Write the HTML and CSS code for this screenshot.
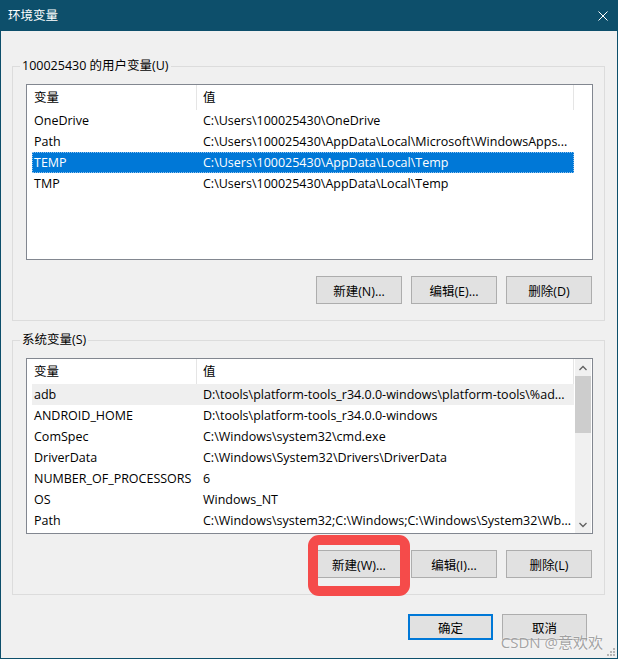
FILE: index.html
```html
<!DOCTYPE html>
<html lang="zh-CN">
<head>
    <meta charset="UTF-8">
    <meta name="viewport" content="width=device-width, initial-scale=1.0">
    <title>环境变量</title>
    <link rel="stylesheet" href="styles.css">
</head>
<body>
    <div class="window">
        <div class="titlebar">
            <span class="title">环境变量</span>
            <svg class="close" width="10" height="10" viewBox="0 0 10 10">
                <path d="M0.5 0.5 L9.5 9.5 M9.5 0.5 L0.5 9.5" stroke="#fff" stroke-width="1" fill="none"/>
            </svg>
        </div>

        <div class="content">
            <!-- 用户变量 -->
            <fieldset class="group">
                <legend>100025430 的用户变量(U)</legend>
                <div class="list">
                    <div class="list-body">
                        <div class="list-head"><div>变量</div><div>值</div></div>
                        <div class="row"><span>OneDrive</span><span>C:\Users\100025430\OneDrive</span></div>
                        <div class="row"><span>Path</span><span>C:\Users\100025430\AppData\Local\Microsoft\WindowsApps...</span></div>
                        <div class="row selected"><span>TEMP</span><span>C:\Users\100025430\AppData\Local\Temp</span></div>
                        <div class="row"><span>TMP</span><span>C:\Users\100025430\AppData\Local\Temp</span></div>
                    </div>
                    <div class="vscroll empty"></div>
                </div>
                <div class="buttons">
                    <button class="btn">新建(N)...</button>
                    <button class="btn">编辑(E)...</button>
                    <button class="btn">删除(D)</button>
                </div>
            </fieldset>

            <!-- 系统变量 -->
            <fieldset class="group">
                <legend>系统变量(S)</legend>
                <div class="list">
                    <div class="list-body">
                        <div class="list-head"><div>变量</div><div>值</div></div>
                        <div class="row current"><span>adb</span><span>D:\tools\platform-tools_r34.0.0-windows\platform-tools\%ad...</span></div>
                        <div class="row"><span>ANDROID_HOME</span><span>D:\tools\platform-tools_r34.0.0-windows</span></div>
                        <div class="row"><span>ComSpec</span><span>C:\Windows\system32\cmd.exe</span></div>
                        <div class="row"><span>DriverData</span><span>C:\Windows\System32\Drivers\DriverData</span></div>
                        <div class="row"><span>NUMBER_OF_PROCESSORS</span><span>6</span></div>
                        <div class="row"><span>OS</span><span>Windows_NT</span></div>
                        <div class="row"><span>Path</span><span>C:\Windows\system32;C:\Windows;C:\Windows\System32\Wb...</span></div>
                    </div>
                    <div class="vscroll">
                        <div class="arrow">
                            <svg width="8" height="6" viewBox="0 0 8 6"><polyline points="0.5,5 4,1.5 7.5,5" stroke="#606060" stroke-width="1.3" fill="none"/></svg>
                        </div>
                        <div class="thumb"></div>
                        <div class="track"></div>
                        <div class="arrow">
                            <svg width="8" height="6" viewBox="0 0 8 6"><polyline points="0.5,1 4,4.5 7.5,1" stroke="#606060" stroke-width="1.3" fill="none"/></svg>
                        </div>
                    </div>
                </div>
                <div class="buttons">
                    <span class="mark"><button class="btn">新建(W)...</button></span>
                    <button class="btn">编辑(I)...</button>
                    <button class="btn">删除(L)</button>
                </div>
            </fieldset>

            <div class="dialog-buttons">
                <button class="btn default">确定</button>
                <button class="btn">取消</button>
            </div>
        </div>

        <div class="watermark">CSDN @意欢欢</div>
        <svg class="grip" width="10" height="10" viewBox="0 0 10 10">
            <rect x="8" y="2" width="2" height="2" fill="#b5b5b5"/>
            <rect x="5" y="5" width="2" height="2" fill="#b5b5b5"/>
            <rect x="8" y="5" width="2" height="2" fill="#b5b5b5"/>
            <rect x="2" y="8" width="2" height="2" fill="#b5b5b5"/>
            <rect x="5" y="8" width="2" height="2" fill="#b5b5b5"/>
            <rect x="8" y="8" width="2" height="2" fill="#b5b5b5"/>
        </svg>
    </div>
</body>
</html>
```

FILE: styles.css
```css
* { box-sizing: border-box; }
body { margin: 0; font-family: "Open Sans", "Noto Sans CJK SC", sans-serif; font-size: 12.5px; color: #000; }

.window { position: relative; width: 618px; height: 659px; background: #f0f0f0; border: 1px solid #0d4f6b; border-top: 0; }

/* 标题栏 */
.titlebar { height: 31px; background: #0d4f6b; color: #fff; display: flex; align-items: center; justify-content: space-between; padding: 0 9px 0 7px; }
.title { line-height: 16px; }
.close { display: block; }

.content { padding: 27px 12px 0 11px; }

/* 分组框 */
.group { margin: 0; padding: 10px 11px 16px 13px; border: 1px solid #dcdcdc; min-width: 0; }
.group + .group { margin-top: 11px; }
.group legend { padding: 0 2px; margin-left: -6px; line-height: 16px; }

/* 列表 */
.list { display: flex; height: 176px; border: 1px solid #828790; background: #fff; }
.list-body { width: 548px; }
.list-head { display: grid; grid-template-columns: 170px 377px; height: 25px; }
.list-head div { border-right: 1px solid #e5e5e5; line-height: 25px; padding-left: 7px; }
.list-head div:last-child { padding-left: 6px; }
.row { display: grid; grid-template-columns: 164px 1fr; height: 21px; line-height: 21px; margin: 0 1px 0 5px; white-space: nowrap; }
.row span { overflow: hidden; padding-left: 2px; }
.row span:last-child { padding-left: 7px; }
.row.selected { background: #0078d7; color: #fff; outline: 1px dotted #8fc1ec; outline-offset: -1px; }
.row.current { background: #efefef; }

/* 滚动条 */
.vscroll { width: 16px; margin-right: 1px; background: #f0f0f0; display: flex; flex-direction: column; }
.vscroll.empty { background: transparent; }
.arrow { height: 17px; display: flex; align-items: center; justify-content: center; }
.arrow svg { display: block; }
.thumb { height: 57px; background: #cdcdcd; }
.track { flex: 1; }

/* 按钮 */
.buttons { display: flex; justify-content: flex-end; gap: 9px; margin: 16px 1px 0 0; }
.btn { width: 86px; height: 28px; padding: 0; background: #e1e1e1; border: 1px solid #adadad; font-family: inherit; font-size: 12.5px; color: #000; }
.btn.default { border: 2px solid #0078d7; }
.dialog-buttons { display: flex; justify-content: flex-end; gap: 9px; margin: 19px 18px 0 0; }
.dialog-buttons .btn { width: 85px; height: 26px; }

/* 红框标注 */
.mark { position: relative; display: flex; }
.mark::after { content: ""; position: absolute; left: -8px; right: -8px; top: -15px; bottom: -18px; border: 10px solid #f54b4a; border-radius: 11px; }

.watermark { position: absolute; right: 14px; bottom: 7px; font-size: 15px; line-height: 18px; color: rgba(125, 125, 125, 0.7); text-shadow: 0 0 2px #fff; }
.grip { position: absolute; right: 2px; bottom: 2px; }
```
